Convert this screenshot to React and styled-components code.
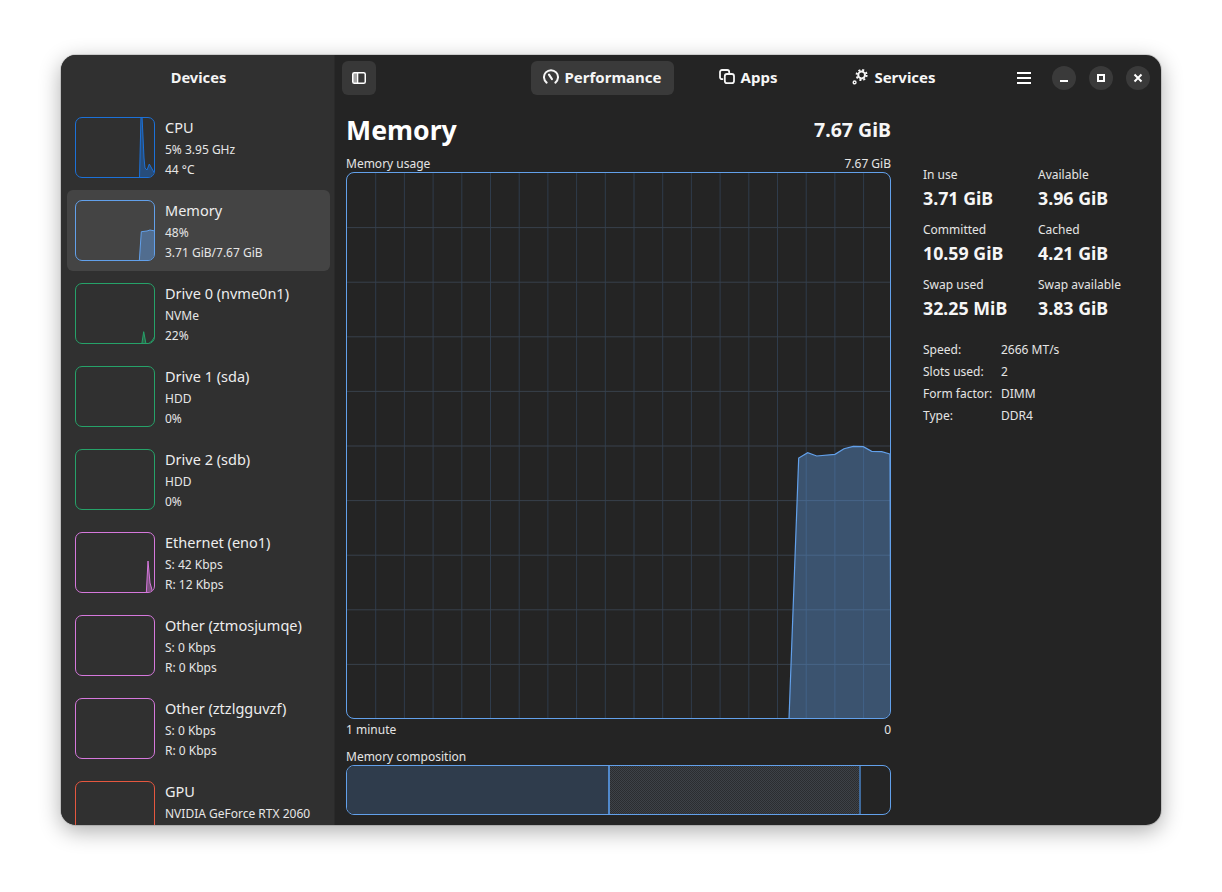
import React from 'react';
import styled, { createGlobalStyle } from 'styled-components';

const GlobalStyle = createGlobalStyle`
  html, body {
    margin: 0;
    padding: 0;
    background: #ffffff;
  }
  body {
    font-family: 'Noto Sans', sans-serif;
    color: #f2f2f2;
  }
`;

const Page = styled.div`
  width: 1222px;
  height: 892px;
  padding: 55px 61px 0;
  box-sizing: border-box;
  overflow: hidden;
`;

const Window = styled.div`
  width: 1100px;
  height: 770px;
  display: flex;
  border-radius: 15px;
  overflow: hidden;
  background: #242424;
  box-shadow: 0 6px 22px rgba(0, 0, 0, 0.33), 0 0 0 1px rgba(0, 0, 0, 0.12);
`;

const Sidebar = styled.aside`
  width: 274px;
  flex-shrink: 0;
  background: #303030;
  border-right: 1px solid #2a2a2a;
  box-sizing: border-box;
  overflow: hidden;
`;

const SidebarTitle = styled.div`
  height: 44px;
  margin-bottom: 8px;
  padding-left: 2px;
  display: flex;
  align-items: center;
  justify-content: center;
  font-size: 14.67px;
  font-weight: 700;
  color: #f4f4f4;
`;

const DeviceList = styled.div`
  display: flex;
  flex-direction: column;
  gap: 2px;
  padding: 0 4px 0 6px;
`;

const DeviceRow = styled.div`
  display: flex;
  align-items: flex-start;
  flex-shrink: 0;
  gap: 10px;
  height: 81px;
  padding: 0 8px;
  box-sizing: border-box;
  border-radius: 6px;
  background: ${props => (props.$active ? '#444444' : 'transparent')};
`;

const Thumb = styled.div`
  width: 80px;
  height: 61px;
  margin-top: 10px;
  flex-shrink: 0;
  box-sizing: border-box;
  border: 1px solid ${props => props.$color};
  border-radius: 7px;
  overflow: hidden;

  svg {
    display: block;
    width: 78px;
    height: 59px;
  }
`;

const DeviceText = styled.div`
  display: flex;
  flex-direction: column;
  min-width: 0;
  margin-top: 9px;
`;

const DeviceName = styled.div`
  font-size: 14.5px;
  line-height: 22px;
  margin-bottom: 2px;
  color: #ededed;
  white-space: nowrap;
`;

const DeviceLine = styled.div`
  font-size: 12px;
  line-height: 20px;
  color: #e6e6e6;
  white-space: nowrap;
`;

const Main = styled.main`
  flex: 1;
  min-width: 0;
  display: flex;
  flex-direction: column;
`;

const HeaderBar = styled.header`
  height: 46px;
  flex-shrink: 0;
  padding: 6px 7px 0;
  box-sizing: border-box;
  display: grid;
  grid-template-columns: 1fr auto 1fr;
  align-items: start;
`;

const IconButton = styled.button`
  width: 34px;
  height: 34px;
  padding: 0;
  border: none;
  border-radius: 6px;
  background: #383838;
  color: #fff;
  display: flex;
  align-items: center;
  justify-content: center;
`;

const Tabs = styled.nav`
  display: flex;
  gap: 3px;
`;

const Tab = styled.button`
  width: 143px;
  height: 34px;
  padding: 0 0 2px;
  border: none;
  border-radius: 6px;
  background: ${props => (props.$active ? '#3a3a3a' : 'transparent')};
  color: #f6f6f6;
  font-family: inherit;
  font-size: 15px;
  font-weight: 700;
  display: flex;
  align-items: center;
  justify-content: center;
  gap: 6px;
`;

const Controls = styled.div`
  display: flex;
  justify-content: flex-end;
  align-items: center;
  height: 34px;
  padding-right: 4px;
`;

const MenuButton = styled.button`
  width: 30px;
  height: 34px;
  padding: 0;
  border: none;
  background: transparent;
  color: #fff;
  display: flex;
  align-items: center;
  justify-content: center;
`;

const WindowButton = styled.button`
  width: 24px;
  height: 24px;
  margin-left: 13px;
  padding: 0;
  border: none;
  border-radius: 50%;
  background: #3a3a3a;
  color: #fff;
  display: flex;
  align-items: center;
  justify-content: center;
`;

const Body = styled.div`
  flex: 1;
  min-height: 0;
  display: flex;
  gap: 32px;
  padding: 14px 0 0 11px;
`;

const GraphColumn = styled.section`
  width: 545px;
  flex-shrink: 0;
`;

const TitleRow = styled.div`
  height: 30px;
  margin-bottom: 10px;
  display: flex;
  align-items: center;
  justify-content: space-between;
`;

const Title = styled.h1`
  margin: 0;
  font-size: 26.67px;
  line-height: 30px;
  font-weight: 700;
  color: #fff;
`;

const TotalValue = styled.div`
  font-size: 19.5px;
  line-height: 30px;
  font-weight: 700;
  color: #f6f6f6;
`;

const CaptionRow = styled.div`
  display: flex;
  justify-content: space-between;
  font-size: 12px;
  line-height: 17px;
  color: #e4e4e4;
`;

const UsageChart = styled.div`
  height: 547px;
  box-sizing: border-box;
  border: 1px solid #62a0ea;
  border-radius: 8px;
  overflow: hidden;
  margin-bottom: 2px;

  svg {
    display: block;
    width: 543px;
    height: 545px;
  }
`;

const CompositionLabel = styled(CaptionRow)`
  margin-top: 10px;
`;

const CompositionBar = styled.div`
  height: 50px;
  box-sizing: border-box;
  border: 1px solid #62a0ea;
  border-radius: 8px;
  overflow: hidden;
  display: flex;
`;

const UsedPart = styled.div`
  width: 261px;
  background: #2f3c4c;
  border-right: 2px solid #5189cc;
`;

const CachedPart = styled.div`
  width: 249px;
  border-right: 2px solid #3f6a9c;
  background-image: repeating-conic-gradient(#3e4248 0 25%, #2b2d30 0 50%);
  background-size: 2px 2px;
`;

const Stats = styled.aside`
  display: flex;
  flex-direction: column;
  padding-top: 51px;
`;

const StatGrid = styled.div`
  display: grid;
  grid-template-columns: 115px 115px;
  row-gap: 8px;
`;

const StatLabel = styled.div`
  font-size: 12px;
  line-height: 17px;
  color: #e4e4e4;
`;

const StatValue = styled.div`
  font-size: 17.8px;
  line-height: 30px;
  font-weight: 700;
  color: #f6f6f6;
`;

const SpecGrid = styled.div`
  display: grid;
  grid-template-columns: 78px 1fr;
  grid-auto-rows: 22px;
  margin-top: 15px;
  align-items: center;
  font-size: 12px;
  color: #e4e4e4;
`;

const GaugeIcon = () => (
  <svg width="16" height="16" viewBox="0 0 16 16" fill="none" stroke="currentColor" strokeWidth="2">
    <path d="M3.6 13.6 A7 7 0 1 1 12.4 13.6" strokeLinecap="round" />
    <path d="M8.9 10 L6 5.6" strokeWidth="2.2" strokeLinecap="round" />
  </svg>
);

const AppsIcon = () => (
  <svg width="16" height="16" viewBox="0 0 16 16" fill="none" stroke="currentColor" strokeWidth="1.8">
    <path d="M4.2 10.2 H3 A2 2 0 0 1 1 8.2 V3 A2 2 0 0 1 3 1 H8.2 A2 2 0 0 1 10.2 3 V4" />
    <rect x="5.8" y="5" width="9.2" height="9.2" rx="2.2" />
  </svg>
);

const GearIcon = () => (
  <svg width="16" height="16" viewBox="0 0 16 16" fill="none" stroke="currentColor">
    <circle cx="9.6" cy="6" r="3.4" strokeWidth="2" />
    <circle cx="9.6" cy="6" r="5" strokeWidth="2" strokeDasharray="2 1.93" />
    <circle cx="2.6" cy="13.4" r="1.4" strokeWidth="1.4" />
  </svg>
);

const SidebarIcon = () => (
  <svg width="14" height="12" viewBox="0 0 14 12" fill="none">
    <rect x="0.75" y="0.75" width="12.5" height="10.5" rx="1.6" stroke="currentColor" strokeWidth="1.5" />
    <rect x="1" y="1" width="4.6" height="10" fill="currentColor" opacity="0.55" />
    <rect x="5" y="1" width="1.3" height="10" fill="currentColor" />
  </svg>
);

const MenuIcon = () => (
  <svg width="14" height="12" viewBox="0 0 14 12" fill="currentColor">
    <rect x="0" y="0" width="14" height="2" />
    <rect x="0" y="5" width="14" height="2" />
    <rect x="0" y="10" width="14" height="2" />
  </svg>
);

const MinimizeIcon = () => (
  <svg width="10" height="10" viewBox="0 0 10 10" fill="currentColor">
    <rect x="1" y="7" width="8" height="2" />
  </svg>
);

const MaximizeIcon = () => (
  <svg width="10" height="10" viewBox="0 0 10 10" fill="none" stroke="currentColor" strokeWidth="2">
    <rect x="2" y="2" width="6" height="6" />
  </svg>
);

const CloseIcon = () => (
  <svg width="10" height="10" viewBox="0 0 10 10" fill="none" stroke="currentColor" strokeWidth="2">
    <path d="M1.5 1.5 L8.5 8.5 M8.5 1.5 L1.5 8.5" />
  </svg>
);

const MiniGraph = ({ color, points, opacity = 0.45 }) => (
  <svg viewBox="0 0 78 59">
    <polygon points={points} fill={color} fillOpacity={opacity} stroke={color} strokeWidth="1" />
  </svg>
);

const blue = '#1c71d8';
const memoryBlue = '#62a0ea';
const green = '#26a269';
const pink = '#d578dc';
const red = '#e5573f';

const devices = [
  { name: 'CPU', lines: ['5% 3.95 GHz', '44 °C'], color: blue, points: '63.5,60 65,-2 66,-2 68,40 69,50 71,52 73.3,46 75.5,50 79,56 79,60' },
  { name: 'Memory', lines: ['48%', '3.71 GiB/7.67 GiB'], color: memoryBlue, points: '63.3,60 65.3,30.7 71,30 74,29 79,30 79,60', active: true },
  { name: 'Drive 0 (nvme0n1)', lines: ['NVMe', '22%'], color: green, points: '65.8,60 67.7,47.7 70,60 72,60 76,57 79,52 79,60' },
  { name: 'Drive 1 (sda)', lines: ['HDD', '0%'], color: green },
  { name: 'Drive 2 (sdb)', lines: ['HDD', '0%'], color: green },
  { name: 'Ethernet (eno1)', lines: ['S: 42 Kbps', 'R: 12 Kbps'], color: pink, points: '70.3,60 72,28 74,50 77,60' },
  { name: 'Other (ztmosjumqe)', lines: ['S: 0 Kbps', 'R: 0 Kbps'], color: pink },
  { name: 'Other (ztzlgguvzf)', lines: ['S: 0 Kbps', 'R: 0 Kbps'], color: pink },
  { name: 'GPU', lines: ['NVIDIA GeForce RTX 2060'], color: red },
];

const stats = [
  ['In use', '3.71 GiB'],
  ['Available', '3.96 GiB'],
  ['Committed', '10.59 GiB'],
  ['Cached', '4.21 GiB'],
  ['Swap used', '32.25 MiB'],
  ['Swap available', '3.83 GiB'],
];

const specs = [
  ['Speed:', '2666 MT/s'],
  ['Slots used:', '2'],
  ['Form factor:', 'DIMM'],
  ['Type:', 'DDR4'],
];

// chart coordinates are relative to the inner box at (347,173)
const usagePoints = [
  [442, 546], [451.7, 285], [460.7, 279.7], [469.7, 283], [488, 281.3], [497, 275.7],
  [506.3, 273.3], [516.3, 273.7], [524.7, 278.3], [534.7, 278.7], [543, 281], [544, 546],
].map(p => p.join(',')).join(' ');

const verticalLines = Array.from({ length: 18 }, (_, i) => 28.7 * (i + 1));
const horizontalLines = Array.from({ length: 9 }, (_, i) => 54.6 * (i + 1));

function UsageGraph() {
  return (
    <svg viewBox="0 0 543 545">
      {verticalLines.map(x => (
        <line key={x} x1={x} x2={x} y1="0" y2="545" stroke="#2f3c4c" strokeWidth="1" />
      ))}
      {horizontalLines.map(y => (
        <line key={y} x1="0" x2="543" y1={y} y2={y} stroke="#38414c" strokeWidth="1" />
      ))}
      <polygon points={usagePoints} fill="#62a0ea" fillOpacity="0.38" stroke="#62a0ea" strokeWidth="1.2" />
    </svg>
  );
}

export default function App() {
  return (
    <Page>
      <GlobalStyle />
      <Window>
        <Sidebar>
          <SidebarTitle>Devices</SidebarTitle>
          <DeviceList>
            {devices.map(device => (
              <DeviceRow key={device.name} $active={device.active}>
                <Thumb $color={device.color}>
                  {device.points && <MiniGraph color={device.color} points={device.points} />}
                </Thumb>
                <DeviceText>
                  <DeviceName>{device.name}</DeviceName>
                  {device.lines.map(line => (
                    <DeviceLine key={line}>{line}</DeviceLine>
                  ))}
                </DeviceText>
              </DeviceRow>
            ))}
          </DeviceList>
        </Sidebar>

        <Main>
          <HeaderBar>
            <IconButton aria-label="Toggle sidebar">
              <SidebarIcon />
            </IconButton>
            <Tabs>
              <Tab $active><GaugeIcon />Performance</Tab>
              <Tab><AppsIcon />Apps</Tab>
              <Tab><GearIcon />Services</Tab>
            </Tabs>
            <Controls>
              <MenuButton aria-label="Menu"><MenuIcon /></MenuButton>
              <WindowButton aria-label="Minimize"><MinimizeIcon /></WindowButton>
              <WindowButton aria-label="Maximize"><MaximizeIcon /></WindowButton>
              <WindowButton aria-label="Close"><CloseIcon /></WindowButton>
            </Controls>
          </HeaderBar>

          <Body>
            <GraphColumn>
              <TitleRow>
                <Title>Memory</Title>
                <TotalValue>7.67 GiB</TotalValue>
              </TitleRow>
              <CaptionRow>
                <span>Memory usage</span>
                <span>7.67 GiB</span>
              </CaptionRow>
              <UsageChart>
                <UsageGraph />
              </UsageChart>
              <CaptionRow>
                <span>1 minute</span>
                <span>0</span>
              </CaptionRow>
              <CompositionLabel>Memory composition</CompositionLabel>
              <CompositionBar>
                <UsedPart />
                <CachedPart />
              </CompositionBar>
            </GraphColumn>

            <Stats>
              <StatGrid>
                {stats.map(([label, value]) => (
                  <div key={label}>
                    <StatLabel>{label}</StatLabel>
                    <StatValue>{value}</StatValue>
                  </div>
                ))}
              </StatGrid>
              <SpecGrid>
                {specs.map(([label, value]) => (
                  <React.Fragment key={label}>
                    <span>{label}</span>
                    <span>{value}</span>
                  </React.Fragment>
                ))}
              </SpecGrid>
            </Stats>
          </Body>
        </Main>
      </Window>
    </Page>
  );
}
